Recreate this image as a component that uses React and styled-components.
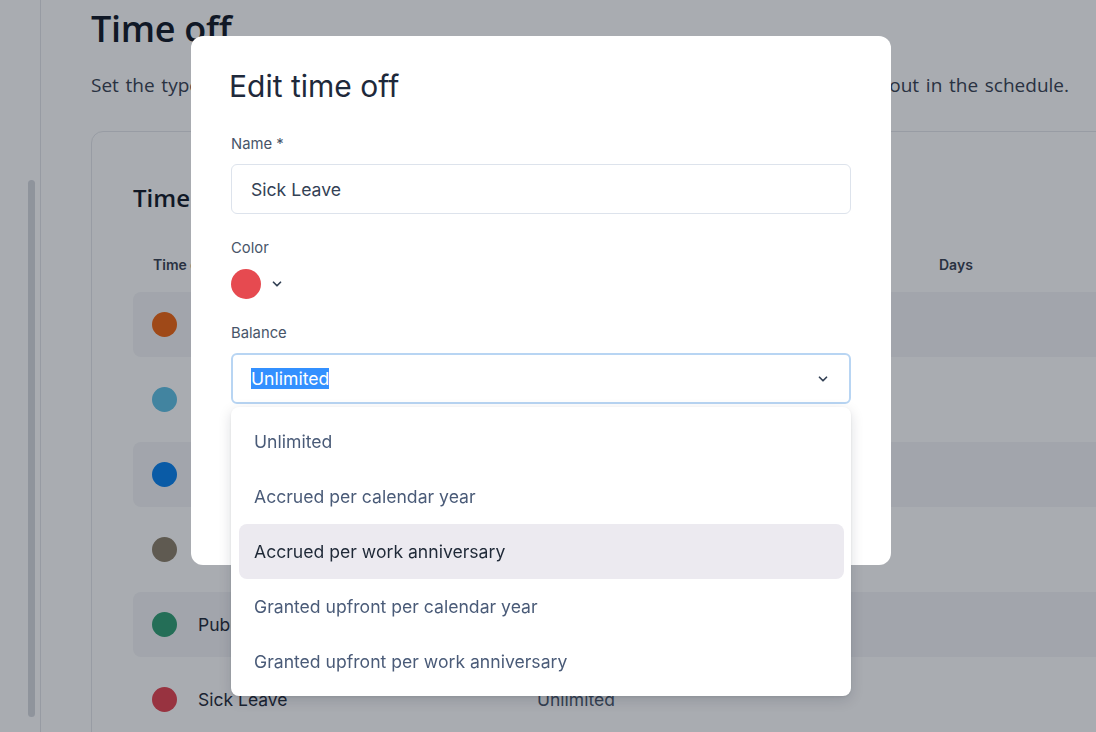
import React from "react";
import styled, { createGlobalStyle } from "styled-components";

const GlobalStyle = createGlobalStyle`
  html, body { margin: 0; padding: 0; overflow: hidden; }
  body { font-family: "Inter", "Noto Sans", sans-serif; background: #ffffff; }
  * { box-sizing: border-box; }
`;

const Page = styled.div`
  display: flex;
  width: 1096px;
  height: 732px;
  overflow: hidden;
  background: #ffffff;
`;

const Sidebar = styled.aside`
  flex: 0 0 41px;
  border-right: 1px solid #e3e5ea;
  display: flex;
  flex-direction: column;
  padding: 180px 0 15px 28px;
`;

const ScrollThumb = styled.div`
  flex: 1;
  width: 7px;
  border-radius: 4px;
  background: #d6d9df;
`;

const Main = styled.main`
  flex: 1;
  padding: 7px 0 0 50px;
  min-width: 0;
  font-family: "Open Sans", "Noto Sans", sans-serif;
  color: #111827;
`;

const PageTitle = styled.h1`
  margin: 0;
  font-size: 36px;
  line-height: 44px;
  font-weight: 600;
  letter-spacing: -0.3px;
  color: #111827;
`;

const Subtitle = styled.p`
  margin: 20px 0 0;
  width: 978px;
  font-size: 19px;
  line-height: 28px;
  color: #374151;
  text-align: justify;
  text-align-last: justify;
`;

const Card = styled.section`
  margin-top: 32px;
  width: 1100px;
  height: 700px;
  border: 1px solid #e5e7eb;
  border-radius: 12px;
  padding: 48px 0 0 41px;
`;

const CardTitle = styled.h2`
  margin: 0;
  font-size: 24px;
  line-height: 36px;
  font-weight: 600;
  color: #111827;
`;

const TableHead = styled.div`
  display: grid;
  grid-template-columns: 384px 402px 1fr;
  margin-top: 39px;
  padding-left: 20px;
  font-family: "Inter", sans-serif;
  font-size: 14px;
  line-height: 20px;
  font-weight: 600;
  color: #374151;
`;

const Rows = styled.div`
  margin-top: 17px;
  display: flex;
  flex-direction: column;
  gap: 10px;
  width: 1000px;
`;

const Row = styled.div`
  display: grid;
  grid-template-columns: 385px 402px 1fr;
  align-items: center;
  height: 65px;
  padding-left: 19px;
  border-radius: 8px;
  background: ${(p) => (p.$striped ? "#f4f5f7" : "transparent")};
  font-family: "Inter", sans-serif;
  font-size: 17.5px;
  color: #1f2937;
`;

const NameCell = styled.div`
  display: flex;
  align-items: center;
  gap: 21px;
`;

const Dot = styled.span`
  width: 25px;
  height: 25px;
  border-radius: 50%;
  background: ${(p) => p.$color};
  flex: 0 0 auto;
`;

const MutedCell = styled.div`
  color: #475569;
`;

const Overlay = styled.div`
  position: fixed;
  inset: 0;
  background: rgba(17, 24, 39, 0.36);
`;

const Modal = styled.div`
  position: fixed;
  left: 191px;
  top: 36px;
  width: 700px;
  height: 529px;
  background: #ffffff;
  border-radius: 12px;
  padding: 33px 40px 0 40px;
  display: flex;
  flex-direction: column;
  font-family: "Inter", sans-serif;
`;

const ModalTitle = styled.h2`
  margin: 0 0 0 -2px;
  font-size: 30px;
  line-height: 34px;
  font-weight: 400;
  color: #1e293b;
`;

const Field = styled.div`
  display: flex;
  flex-direction: column;
  margin-top: ${(p) => p.$gap}px;
  position: relative;
`;

const Label = styled.label`
  font-size: 14.8px;
  line-height: 20px;
  color: #475569;
  margin-bottom: ${(p) => p.$gap || 10}px;
`;

const TextInput = styled.div`
  height: 50px;
  border: 1px solid #dde3ec;
  border-radius: 6px;
  padding: 0 19px;
  display: flex;
  align-items: center;
  font-size: 17.6px;
  color: #334155;
`;

const ColorPicker = styled.div`
  display: flex;
  align-items: center;
  gap: 9px;
  height: 30px;
  color: #334155;
`;

const Swatch = styled.span`
  width: 30px;
  height: 30px;
  border-radius: 50%;
  background: ${(p) => p.$color};
`;

const SelectBox = styled.div`
  height: 51px;
  border: 2px solid #b8d5f3;
  border-radius: 6px;
  padding: 0 19px 0 18px;
  display: flex;
  align-items: center;
  justify-content: space-between;
  font-size: 17.6px;
  color: #334155;
`;

const Selected = styled.span`
  background: #3390ff;
  color: #ffffff;
  line-height: 21px;
`;

const SaveButton = styled.button`
  margin-top: 60px;
  width: 120px;
  height: 50px;
  border: none;
  border-radius: 6px;
  background: #2563eb;
  color: #ffffff;
  font-family: "Inter", sans-serif;
  font-size: 16px;
`;

const Menu = styled.ul`
  position: absolute;
  left: 0;
  top: calc(100% + 3px);
  width: 620px;
  margin: 0;
  padding: 7px 7px 7px 8px;
  list-style: none;
  background: #ffffff;
  border-radius: 8px;
  box-shadow: 0 4px 14px rgba(15, 23, 42, 0.14), 0 1px 3px rgba(15, 23, 42, 0.08);
  z-index: 2;
`;

const MenuItem = styled.li`
  height: 55px;
  display: flex;
  align-items: center;
  padding: 0 15px;
  border-radius: 8px;
  font-size: 17.6px;
  color: ${(p) => (p.$active ? "#1f2937" : "#4a5b78")};
  background: ${(p) => (p.$active ? "#eceaf0" : "transparent")};
`;

const Chevron = ({ size = 14 }) => (
  <svg width={size} height={size} viewBox="0 0 16 16" fill="none">
    <path d="M4 6l4 4 4-4" stroke="#334155" strokeWidth="2" strokeLinecap="round" strokeLinejoin="round" />
  </svg>
);

const rows = [
  { name: "Vacation", color: "#ef6510", balance: "Accrued per calendar year" },
  { name: "Parental Leave", color: "#5fc0e4", balance: "Unlimited" },
  { name: "Business Trip", color: "#0780ee", balance: "Unlimited" },
  { name: "Unpaid Leave", color: "#8c7f69", balance: "Unlimited" },
  { name: "Public Holiday", color: "#2f9f72", balance: "Unlimited" },
  { name: "Sick Leave", color: "#e4434f", balance: "Unlimited" },
];

const options = [
  "Unlimited",
  "Accrued per calendar year",
  "Accrued per work anniversary",
  "Granted upfront per calendar year",
  "Granted upfront per work anniversary",
];

export default function App() {
  return (
    <>
      <GlobalStyle />
      <Page>
        <Sidebar>
          <ScrollThumb />
        </Sidebar>
        <Main>
          <PageTitle>Time off</PageTitle>
          <Subtitle>
            Set the types of time off your team members can request, and choose how each is laid out in the schedule.
          </Subtitle>
          <Card>
            <CardTitle>Time off types</CardTitle>
            <TableHead>
              <span>Time off type</span>
              <span>Balance</span>
              <span>Days</span>
            </TableHead>
            <Rows>
              {rows.map((r, i) => (
                <Row key={r.name} $striped={i % 2 === 0}>
                  <NameCell>
                    <Dot $color={r.color} />
                    {r.name}
                  </NameCell>
                  <MutedCell>{r.balance}</MutedCell>
                  <span />
                </Row>
              ))}
            </Rows>
          </Card>
        </Main>
      </Page>
      <Overlay />
      <Modal>
        <ModalTitle>Edit time off</ModalTitle>
        <Field $gap={31}>
          <Label>Name *</Label>
          <TextInput>Sick Leave</TextInput>
        </Field>
        <Field $gap={24}>
          <Label $gap={11}>Color</Label>
          <ColorPicker>
            <Swatch $color="#e64a50" />
            <Chevron />
          </ColorPicker>
        </Field>
        <Field $gap={24}>
          <Label>Balance</Label>
          <SelectBox>
            <Selected>Unlimited</Selected>
            <Chevron />
          </SelectBox>
          <Menu>
            {options.map((o, i) => (
              <MenuItem key={o} $active={i === 2}>
                {o}
              </MenuItem>
            ))}
          </Menu>
        </Field>
        <div>
          <SaveButton>Save</SaveButton>
        </div>
      </Modal>
    </>
  );
}
